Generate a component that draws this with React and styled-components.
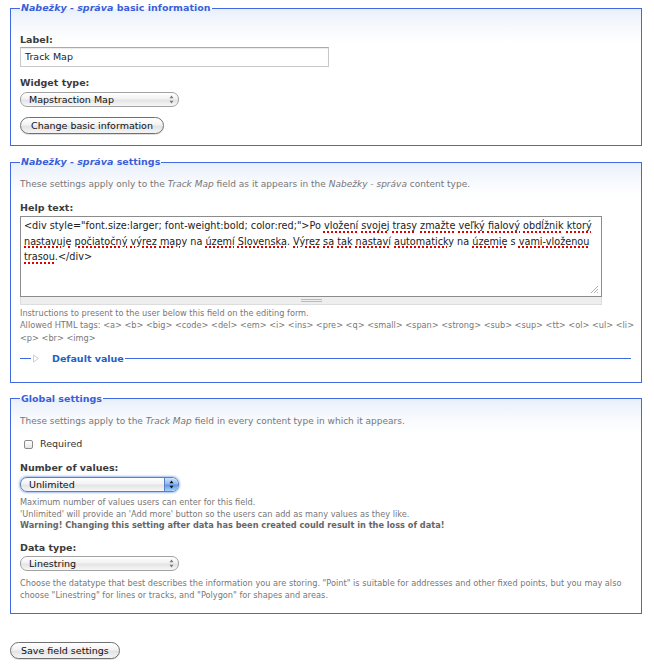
import React from 'react';
import styled, { createGlobalStyle } from 'styled-components';

const GlobalStyle = createGlobalStyle`
  html, body {
    margin: 0;
    padding: 0;
    background: #fff;
  }
  body {
    font-family: "DejaVu Sans", Verdana, sans-serif;
    color: #494949;
  }
`;

const blue = '#4169e1';

function App() {
  return (
    <Page>
      <GlobalStyle />

      <Fieldset>
        <Legend><em>Nabežky - správa</em> basic information</Legend>
        <FormItem $top={10}>
          <Label>Label:</Label>
          <TextInput>Track Map</TextInput>
        </FormItem>
        <FormItem $top={10}>
          <Label $gap={3}>Widget type:</Label>
          <Select value="Mapstraction Map" />
        </FormItem>
        <Button $top={10}>Change basic information</Button>
      </Fieldset>

      <Fieldset>
        <Legend><em>Nabežky - správa</em> settings</Legend>
        <Intro>
          These settings apply only to the <em>Track Map</em> field as it appears in the <em>Nabežky - správa</em> content type.
        </Intro>
        <FormItem $top={12}>
          <Label $gap={2}>Help text:</Label>
          <TextArea>
            <TextLine>
              {'<div style="font.size:larger; font-weight:bold; color:red;">Po '}
              <Spell>vložení</Spell> <Spell>svojej</Spell> <Spell>trasy</Spell> <Spell>zmažte</Spell>{' '}
              <Spell>veľký</Spell> <Spell>fialový</Spell> <Spell>obdĺžnik</Spell> <Spell>ktorý</Spell>
            </TextLine>
            <TextLine>
              <Spell>nastavuje</Spell> <Spell>počiatočný</Spell> <Spell>výrez</Spell> <Spell>mapy</Spell> na{' '}
              <Spell>území</Spell> <Spell>Slovenska</Spell>. <Spell>Výrez</Spell> <Spell>sa</Spell>{' '}
              <Spell>tak</Spell> <Spell>nastaví</Spell> <Spell>automaticky</Spell> na <Spell>územie</Spell> s{' '}
              <Spell>vami-vloženou</Spell>
            </TextLine>
            <TextLine>
              <Spell>trasou</Spell>.{'</div>'}
            </TextLine>
            <ResizeMark width="9" height="9" viewBox="0 0 9 9">
              <path d="M8 1 L1 8 M8 4 L4 8 M8 7 L7 8" stroke="#999" strokeWidth="0.8" />
            </ResizeMark>
          </TextArea>
          <Grippie><GripLines /></Grippie>
          <Description $top={2}>
            Instructions to present to the user below this field on the editing form.
            <br />
            {'Allowed HTML tags: <a> <b> <big> <code> <del> <em> <i> <ins> <pre> <q> <small> <span> <strong> <sub> <sup> <tt> <ol> <ul> <li>'}
            <br />
            {'<p> <br> <img>'}
          </Description>
        </FormItem>
        <Collapsed>
          <CollapsedLegend>
            <Arrow width="8" height="9" viewBox="0 0 8 9">
              <path d="M1.5 1 L6.5 4.5 L1.5 8 Z" fill="#fff" stroke="#cfcfcf" strokeWidth="1" />
            </Arrow>
            <LegendLink>Default value</LegendLink>
          </CollapsedLegend>
        </Collapsed>
      </Fieldset>

      <Fieldset>
        <Legend>Global settings</Legend>
        <Intro>
          These settings apply to the <em>Track Map</em> field in every content type in which it appears.
        </Intro>
        <CheckRow>
          <Checkbox />
          <span>Required</span>
        </CheckRow>
        <FormItem $top={12}>
          <Label $gap={3}>Number of values:</Label>
          <Select value="Unlimited" $focused />
          <Description $top={5} $lh={11.7}>
            Maximum number of values users can enter for this field.
            <br />
            'Unlimited' will provide an 'Add more' button so the users can add as many values as they like.
            <br />
            <strong>Warning! Changing this setting after data has been created could result in the loss of data!</strong>
          </Description>
        </FormItem>
        <FormItem $top={10}>
          <Label $gap={2}>Data type:</Label>
          <Select value="Linestring" />
          <Description $top={6}>
            Choose the datatype that best describes the information you are storing. "Point" is suitable for addresses and other fixed points, but you may also
            <br />
            choose "Linestring" for lines or tracks, and "Polygon" for shapes and areas.
          </Description>
        </FormItem>
      </Fieldset>

      <Button $top={18}>Save field settings</Button>
    </Page>
  );
}

function Select({ value, $focused }) {
  return (
    <SelectBox $focused={$focused}>
      <SelectText>{value}</SelectText>
      <SelectArrows $focused={$focused}>
        <svg width="5" height="9" viewBox="0 0 5 9">
          <path d="M2.5 0.5 L4.5 3.2 L0.5 3.2 Z" fill={$focused ? '#111' : '#777'} />
          <path d="M2.5 8.5 L4.5 5.8 L0.5 5.8 Z" fill={$focused ? '#111' : '#777'} />
        </svg>
      </SelectArrows>
    </SelectBox>
  );
}

const Page = styled.div`
  width: 632px;
  padding: 2px 12px 12px 10px;
`;

const Fieldset = styled.fieldset`
  margin: 0 0 10px 0;
  padding: 10px 10px 11px 9px;
  border: 1px solid ${blue};
  background: linear-gradient(to bottom, #e9f0fb 0px, #f4f8fd 14px, #fff 34px);
  min-width: 0;
`;

const Legend = styled.legend`
  padding: 0 1px;
  margin-left: 0;
  font-size: 9.5px;
  line-height: 12px;
  font-weight: bold;
  color: #3a5fd9;

  em {
    font-style: italic;
  }
`;

const FormItem = styled.div`
  margin-top: ${p => p.$top || 0}px;
`;

const Label = styled.div`
  font-size: 9.5px;
  line-height: 12px;
  font-weight: bold;
  color: #3b3b3b;
  margin-bottom: ${p => p.$gap ?? 1}px;
`;

const TextInput = styled.div`
  box-sizing: border-box;
  width: 309px;
  height: 20px;
  padding: 0 4px;
  border: 1px solid #c9c9c9;
  border-top-color: #a9a9a9;
  box-shadow: inset 0 1px 1px rgba(0, 0, 0, 0.08);
  background: #fff;
  font-size: 9.5px;
  line-height: 18px;
  color: #222;
`;

const SelectBox = styled.div`
  box-sizing: border-box;
  display: flex;
  align-items: stretch;
  width: 159px;
  height: 15px;
  border: 1px solid ${p => (p.$focused ? '#5f7fb8' : '#a2a2a2')};
  border-radius: 7px;
  overflow: hidden;
  background: linear-gradient(to bottom, #ffffff 0%, #f2f2f2 45%, #e4e4e4 55%, #f7f7f7 100%);
  box-shadow: ${p => (p.$focused ? '0 0 2px 1px rgba(90, 140, 230, 0.55)' : 'none')};
`;

const SelectText = styled.div`
  flex: 1;
  padding-left: 8px;
  font-size: 9.5px;
  line-height: 13px;
  color: #111;
  white-space: nowrap;
`;

const SelectArrows = styled.div`
  width: 13px;
  display: flex;
  align-items: center;
  justify-content: center;
  border-left: ${p => (p.$focused ? '1px solid #5a7fc4' : 'none')};
  background: ${p =>
    p.$focused
      ? 'linear-gradient(to bottom, #cfe3fb 0%, #8fbaf0 45%, #5e9ae9 55%, #a9d2fb 100%)'
      : 'transparent'};
`;

const Button = styled.div`
  box-sizing: border-box;
  display: inline-block;
  margin-top: ${p => p.$top || 0}px;
  height: 17px;
  padding: 0 10px;
  border: 1px solid #707070;
  border-radius: 9px;
  background: linear-gradient(to bottom, #ffffff 0%, #f3f3f3 45%, #e3e3e3 55%, #f5f5f5 100%);
  box-shadow: 0 1px 0 rgba(0, 0, 0, 0.12);
  font-size: 9.5px;
  line-height: 15px;
  color: #111;
  white-space: nowrap;
`;

const Intro = styled.div`
  font-size: 9px;
  line-height: 12px;
  color: #777;
  white-space: nowrap;
`;

const Description = styled.div`
  margin-top: ${p => p.$top || 0}px;
  font-size: 8.2px;
  line-height: ${p => p.$lh || 12.3}px;
  color: #777;
  white-space: nowrap;

  strong {
    color: #666;
  }
`;

const TextArea = styled.div`
  position: relative;
  box-sizing: border-box;
  width: 582px;
  height: 81px;
  padding: 1px 3px;
  border: 1px solid #8c8c8c;
  background: #fff;
  font-size: 9.7px;
  line-height: 15.5px;
  color: #222;
`;

const TextLine = styled.div`
  white-space: nowrap;
`;

const Spell = styled.span`
  text-decoration: underline dotted #e00000;
  text-decoration-thickness: 1.5px;
  text-underline-offset: 2px;
`;

const ResizeMark = styled.svg`
  position: absolute;
  right: 2px;
  bottom: 2px;
`;

const Grippie = styled.div`
  box-sizing: border-box;
  width: 582px;
  height: 8px;
  display: flex;
  align-items: center;
  justify-content: center;
  background: #eee;
  border: 1px solid #ddd;
  border-top: none;
`;

const GripLines = styled.div`
  width: 21px;
  height: 3px;
  border-top: 1px solid #bbb;
  border-bottom: 1px solid #bbb;
  box-sizing: border-box;
`;

const Collapsed = styled.fieldset`
  margin: 9px 0 6px 0;
  padding: 0;
  border: none;
  border-top: 1px solid ${blue};
  min-width: 0;
`;

const CollapsedLegend = styled.legend`
  display: flex;
  align-items: center;
  margin-left: 11px;
  padding: 0 1px;
  line-height: 12px;
`;

const Arrow = styled.svg`
  margin-right: 12px;
`;

const LegendLink = styled.span`
  font-size: 9.5px;
  font-weight: bold;
  color: #1c63c4;
`;

const CheckRow = styled.div`
  display: flex;
  align-items: center;
  gap: 7px;
  margin-top: 11px;
  padding-left: 4px;
  font-size: 9.5px;
  line-height: 12px;
  color: #333;
`;

const Checkbox = styled.span`
  box-sizing: border-box;
  width: 9px;
  height: 9px;
  margin-top: 2px;
  border: 1px solid #8a8a8a;
  border-radius: 2px;
  background: linear-gradient(to bottom, #fff, #e6e6e6);
`;

export default App;
